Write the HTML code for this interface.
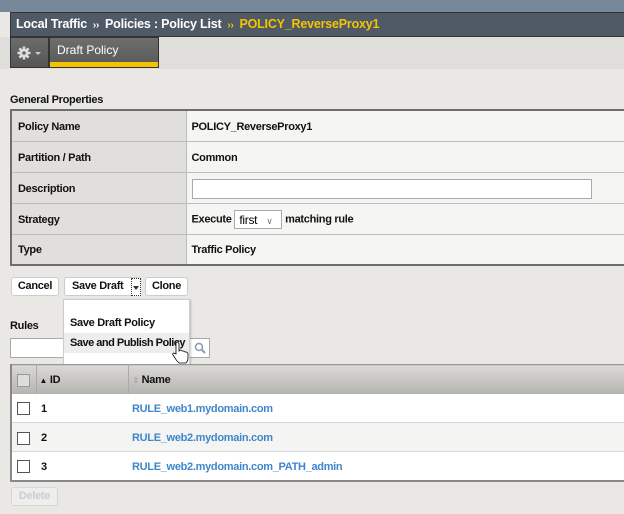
<!DOCTYPE html>
<html><head><style>
*{box-sizing:border-box;margin:0;padding:0}
body{width:624px;height:514px;overflow:hidden;background:#e9e8e4;font-family:"Liberation Sans",Arial,sans-serif;font-size:11px;font-weight:bold;color:#111;position:relative;letter-spacing:-0.3px}
.a{position:absolute}
.top{left:0;top:0;width:624px;height:12px;background:#77879a}
.bc{left:10px;top:12px;width:614px;height:25px;background:#505a67;border-top:1px solid #333;border-bottom:1px solid #333;border-left:1px solid #333;color:#fff;font-size:12.5px;line-height:23px;padding-left:5px;letter-spacing:-0.2px}
.bc .y{color:#f5c400}
.tabbar{left:0;top:37px;width:624px;height:32px;background:#dfdedb}
.gear{left:10px;top:37px;width:39px;height:31px;background:linear-gradient(#6c6c6c,#555);border:1px solid #333}
.tab{left:49px;top:37px;width:110px;height:31px;background:linear-gradient(#6e6e6e,#585858);border:1px solid #333;color:#fff;font-weight:normal;font-size:12px;padding:5px 0 0 7px;letter-spacing:0}
.tab:after{content:"";position:absolute;left:0;right:0;bottom:0;height:5px;background:#f5c400}
table{border-collapse:collapse;table-layout:fixed}
.gp{left:10px;top:109px;width:620px;border:2px solid #6e6e6e;border-right:none}
.gp td{height:31px;border-bottom:1px solid #bcbcbc;background:#f5f5f3;padding-left:5px;padding-top:2px;white-space:nowrap}
.gp td.l{width:175px;background:#e0dfdc;border-right:1px solid #bcbcbc;padding-left:6px}
.gp tr:last-child td{border-bottom:none}
.btn{height:19px;background:#fff;border:1px solid #ccc;border-radius:3px;text-align:center;line-height:17px;white-space:nowrap}
.menu{left:63px;top:299px;width:127px;height:67px;background:#fff;border:1px solid #ccc;box-shadow:1px 1px 2px rgba(0,0,0,.2)}
.rt{left:10px;top:364px;width:620px;border:2px solid #888;border-right:none;border-top:1px solid #999}
.rt th{height:29px;background:linear-gradient(#dad9d6,#b4b3b0);text-align:left;border-right:1px solid #aaa;padding-top:2px}
.rt td{height:29px;border-bottom:1px solid #d8d8d8;background:#fff;padding-top:2px}
.rt tr.g td{background:#f4f4f2}
.rt tr:last-child td{border-bottom:none}
.cb{display:inline-block;width:13px;height:13px;border:1px solid #555;background:#fff;vertical-align:middle;margin-left:5px}
a{color:#3f86cb;text-decoration:none}
</style></head><body>
<div class="a top"></div>
<div class="a bc">Local Traffic <span style="font-size:10px">&nbsp;››&nbsp;</span> Policies : Policy List <span class="y"><span style="font-size:10px">&nbsp;››&nbsp;</span> POLICY_ReverseProxy1</span></div>
<div class="a tabbar"></div>
<div class="a gear"><svg width="37" height="29"><g fill="#ddd"><circle cx="13" cy="15" r="4.5"/><g stroke="#ddd" stroke-width="2.5"><line x1="13" y1="8.5" x2="13" y2="21.5"/><line x1="6.5" y1="15" x2="19.5" y2="15"/><line x1="8.4" y1="10.4" x2="17.6" y2="19.6"/><line x1="17.6" y1="10.4" x2="8.4" y2="19.6"/></g><circle cx="13" cy="15" r="1.8" fill="#666"/><path d="M24 14h6l-3 3z" fill="#ccc"/></g></svg></div>
<div class="a tab">Draft Policy</div>
<div class="a" style="left:10px;top:94px">General Properties</div>
<table class="a gp">
<tr><td class="l">Policy Name</td><td>POLICY_ReverseProxy1</td></tr>
<tr><td class="l">Partition / Path</td><td>Common</td></tr>
<tr><td class="l">Description</td><td><div style="width:400px;height:20px;border:1px solid #aaa;background:#fff"></div></td></tr>
<tr><td class="l">Strategy</td><td>Execute <span style="display:inline-block;width:48px;height:19px;border:1px solid #aaa;background:#fff;vertical-align:middle;padding:2px 0 0 4px;font-weight:normal;font-size:12px;color:#000">first <span style="color:#777;font-size:9px;margin-left:6px">∨</span></span> matching rule</td></tr>
<tr><td class="l">Type</td><td>Traffic Policy</td></tr>
</table>
<div class="a btn" style="left:11px;top:277px;width:48px">Cancel</div>
<div class="a btn" style="left:64px;top:277px;width:77px;text-align:left;padding-left:7px">Save Draft</div>
<div class="a" style="left:131px;top:278px;width:10px;height:18px;border:1px dotted #333;background:#fff"><div style="margin:7px 0 0 1px;width:0;height:0;border-left:3.5px solid transparent;border-right:3.5px solid transparent;border-top:4px solid #333"></div></div>
<div class="a btn" style="left:145px;top:277px;width:43px">Clone</div>
<div class="a" style="left:10px;top:320px">Rules</div>
<div class="a" style="left:10px;top:338px;width:200px;height:20px;border:1px solid #aaa;background:#fff"></div>
<div class="a" style="left:192px;top:339px;width:17px;height:18px;background:#fff"><svg width="17" height="18"><circle cx="7" cy="8" r="3.5" fill="none" stroke="#8a9bb0" stroke-width="1.5"/><line x1="9.5" y1="10.5" x2="13" y2="14" stroke="#8a9bb0" stroke-width="2"/></svg></div>
<div class="a menu"></div>
<div class="a" style="left:64px;top:314px;width:125px;height:18px;padding-left:6px;line-height:18px;white-space:nowrap">Save Draft Policy</div>
<div class="a" style="left:64px;top:333px;width:125px;height:20px;padding-left:6px;line-height:20px;background:#ededed;white-space:nowrap;letter-spacing:-0.5px">Save and Publish Policy</div>
<svg class="a" style="left:171px;top:340px" width="20" height="24"><path d="M6 2c1 0 2 1 2 2v7l1-1c1 0 2 1 2 1l1 0c1 0 2 1 2 1h1c1 0 2 1 2 2v4c0 2-1 4-2 5H8c-1-1-3-3-4-5l-2-3c-1-1 0-2 1-2l2 1V4c0-1 0-2 1-2z" fill="#fff" stroke="#000" stroke-width="0.8"/></svg>
<table class="a rt">
<tr><th style="width:25px"><span class="cb" style="background:#ddd;border-color:#999"></span></th><th style="width:92px;padding-left:3px"><span style="font-size:8px">▲</span> ID</th><th style="padding-left:4px"><span style="color:#aaa;font-size:8px">⇕</span> Name</th></tr>
<tr><td><span class="cb"></span></td><td style="padding-left:5px">1</td><td style="padding-left:4px"><a>RULE_web1.mydomain.com</a></td></tr>
<tr class="g"><td><span class="cb"></span></td><td style="padding-left:5px">2</td><td style="padding-left:4px"><a>RULE_web2.mydomain.com</a></td></tr>
<tr><td><span class="cb"></span></td><td style="padding-left:5px">3</td><td style="padding-left:4px"><a>RULE_web2.mydomain.com_PATH_admin</a></td></tr>
</table>
<div class="a btn" style="left:11px;top:487px;width:47px;background:#eee;color:#ccc;border-color:#d6d6d6">Delete</div>
</body></html>
